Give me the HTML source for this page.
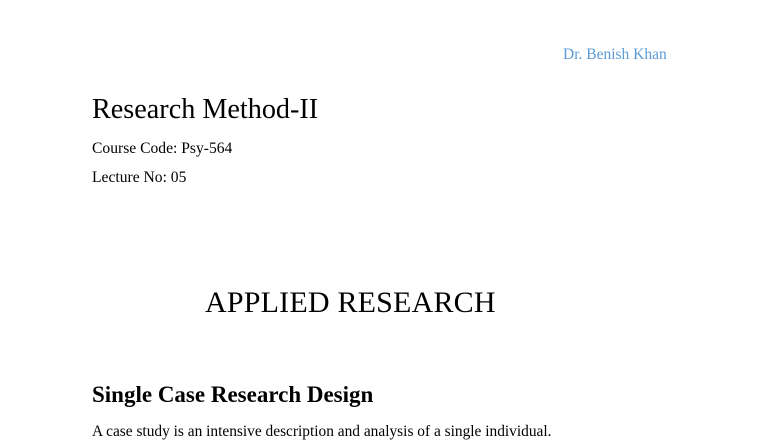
<!DOCTYPE html>
<html><head><meta charset="utf-8"><style>
html,body{margin:0;padding:0;background:#fff;width:784px;height:441px;overflow:hidden}
div{position:absolute;white-space:nowrap;font-family:"Liberation Serif",serif;line-height:1;color:#000}
</style></head><body>
<div style="left:563px;top:47px;font-size:15.5px;color:#5b9bd5">Dr. Benish Khan</div>
<div style="left:92px;top:96px;font-size:28.2px">Research Method-II</div>
<div style="left:92px;top:141px;font-size:15.6px">Course Code: Psy-564</div>
<div style="left:92px;top:170px;font-size:15.6px">Lecture No: 05</div>
<div style="left:205px;top:288px;font-size:30px;letter-spacing:0.2px">APPLIED RESEARCH</div>
<div style="left:92px;top:383px;font-size:23px;font-weight:bold">Single Case Research Design</div>
<div style="left:92px;top:424px;font-size:15.4px">A case study is an intensive description and analysis of a single individual.</div>
</body></html>
